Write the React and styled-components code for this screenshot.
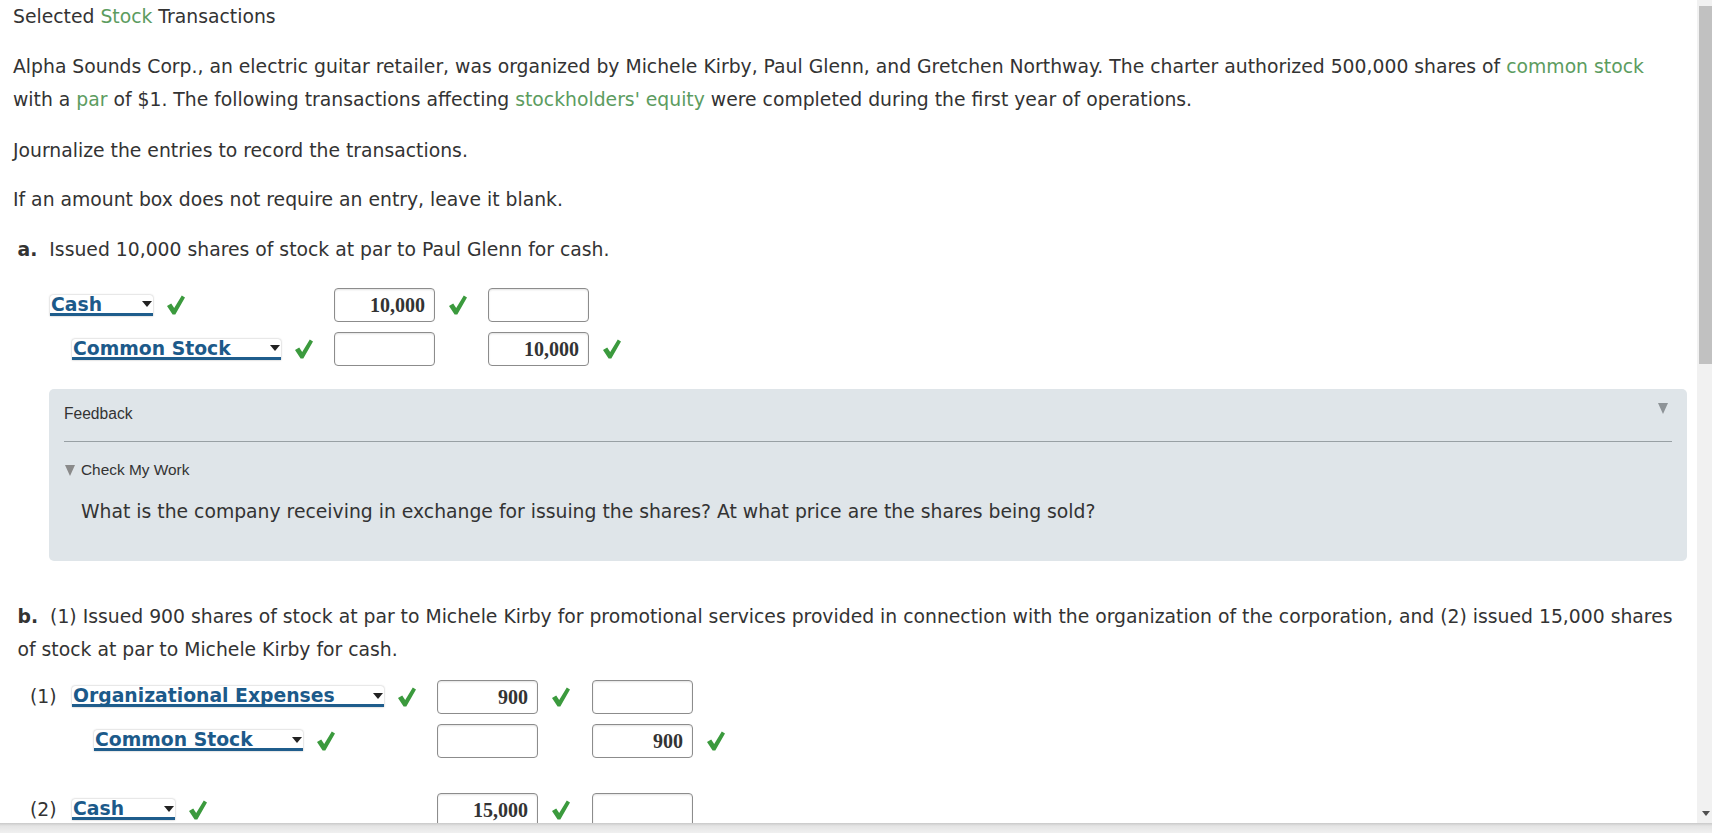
import React from "react";
import styled, { createGlobalStyle } from "styled-components";

const Global = createGlobalStyle`
  html, body { margin: 0; padding: 0; height: 100%; overflow: hidden; background: #fff; }
`;

const Page = styled.div`
  padding: 1px 27px 0 13px;
  font-family: "DejaVu Sans", Verdana, sans-serif;
  font-size: 18.8px;
  line-height: 33px;
  color: #333;
`;

const Title = styled.div`
  line-height: 32px;
`;

const Para = styled.p`
  margin: ${(p) => p.$mt ?? 17}px 0 0;
`;

const Term = styled.span`
  color: #5c9c60;
`;

const Part = styled.div`
  padding-left: 4.5px;
  margin-top: ${(p) => p.$mt}px;
`;

const PartLabel = styled.b`
  margin-right: 12px;
`;

const Journal = styled.div`
  display: flex;
  flex-direction: column;
  gap: ${(p) => p.$gap}px;
  margin-top: ${(p) => p.$mt}px;
  margin-left: ${(p) => p.$ml}px;
`;

const Row = styled.div`
  display: grid;
  grid-template-columns: ${(p) => p.$cols};
  align-items: center;
  height: 34px;
  margin-top: ${(p) => p.$mt || 0}px;
`;

const RowLabel = styled.span`
  white-space: nowrap;
`;

const Cell = styled.div`
  display: flex;
  align-items: center;
  gap: 14px;
  padding-left: ${(p) => p.$indent || 0}px;
`;

const Select = styled.div`
  display: flex;
  justify-content: space-between;
  box-sizing: border-box;
  width: ${(p) => p.$w}px;
  height: 21px;
  background: #fff;
  border-bottom: 3px solid #1f5d8c;
  border-radius: 3px 3px 0 0;
  box-shadow: 0 0 2px rgba(0, 0, 0, 0.35);
  color: #1c5a8a;
  font-weight: bold;
  padding: 0 1px 0 1px;
`;

const SelectText = styled.span`
  display: block;
  height: 18px;
  line-height: 20px;
  white-space: nowrap;
`;

const Arrow = styled.span`
  align-self: center;
  margin-top: 1px;
  width: 0;
  height: 0;
  border-left: 5px solid transparent;
  border-right: 5px solid transparent;
  border-top: 6px solid #222;
`;

const Amount = styled.div`
  box-sizing: border-box;
  width: 101px;
  height: 34px;
  border: 1px solid #8c8c8c;
  border-radius: 4px;
  box-shadow: inset 0 1px 2px rgba(0, 0, 0, 0.12);
  background: #fff;
  font-family: "Liberation Serif", "Times New Roman", serif;
  font-weight: bold;
  font-size: 20px;
  line-height: 32px;
  text-align: right;
  padding-right: 9px;
  color: #333;
`;

const CheckSvg = styled.svg`
  width: 18px;
  height: 20px;
  flex: none;
  visibility: ${(p) => (p.$hidden ? "hidden" : "visible")};
`;

const Check = ({ hidden }) => (
  <CheckSvg viewBox="0 0 18 20" $hidden={hidden}>
    <path
      d="M0 10.9 L4.2 8.4 L7.2 13 L14.8 0.4 L18 2.4 L8.3 19.6 L5.6 19.6 Z"
      fill="#3b9a3d"
    />
  </CheckSvg>
);

const FeedbackBox = styled.div`
  margin: 23px -2px 0 31.5px;
  background: #dfe5e9;
  border-radius: 5px;
  padding: 15px 15px 33px 15px;
`;

const FeedbackHead = styled.div`
  display: flex;
  justify-content: space-between;
  font-family: "Liberation Sans", Arial, sans-serif;
  font-size: 15.6px;
  line-height: 20px;
  color: #333;
`;

const DownTri = styled.span`
  width: 0;
  height: 0;
  margin: ${(p) => p.$m};
  border-left: 5px solid transparent;
  border-right: 5px solid transparent;
  border-top: 11px solid ${(p) => p.$c};
`;

const Rule = styled.div`
  height: 1px;
  background: #98a0a4;
  margin-top: 17px;
`;

const Toggle = styled.div`
  display: flex;
  align-items: center;
  gap: 6px;
  margin-top: 18px;
  font-family: "Liberation Sans", Arial, sans-serif;
  font-size: 15.4px;
  line-height: 20px;
  color: #333;
`;

const Question = styled.div`
  margin-top: 15px;
  padding-left: 17px;
`;

const ScrollTrack = styled.div`
  position: fixed;
  top: 0;
  right: 0;
  bottom: 0;
  width: 15px;
  background: #f1f1f1;
`;

const ScrollThumb = styled.div`
  position: absolute;
  top: 6px;
  left: 2px;
  right: 0;
  height: 358px;
  background: #c1c1c1;
`;

const ScrollDown = styled.span`
  position: absolute;
  bottom: 17px;
  left: 5px;
  width: 0;
  height: 0;
  border-left: 4px solid transparent;
  border-right: 4px solid transparent;
  border-top: 5px solid #505050;
`;

const BottomBar = styled.div`
  position: fixed;
  left: 0;
  right: 0;
  bottom: 0;
  height: 10px;
  background: linear-gradient(to bottom, #c9c9c9 0, #e4e4e4 3px, #f0f0f0 100%);
`;

const Entry = ({ cols, label, acct, w, indent, debit, credit, mt }) => (
  <Row $cols={cols} $mt={mt}>
    <RowLabel>{label}</RowLabel>
    <Cell $indent={indent}>
      <Select $w={w}>
        <SelectText>{acct}</SelectText>
        <Arrow />
      </Select>
      <Check />
    </Cell>
    <Cell>
      <Amount>{debit}</Amount>
      <Check hidden={!debit} />
    </Cell>
    <Cell>
      <Amount>{credit}</Amount>
      <Check hidden={!credit} />
    </Cell>
  </Row>
);

export default function App() {
  const colsA = "0px 284px 154px auto";
  const colsB = "42px 365px 155px auto";
  return (
    <>
      <Global />
      <Page>
        <Title>
          Selected <Term>Stock</Term> Transactions
        </Title>
        <Para $mt={16.5}>
          Alpha Sounds Corp., an electric guitar retailer, was organized by Michele Kirby, Paul
          Glenn, and Gretchen Northway. The charter authorized 500,000 shares of{" "}
          <Term>common stock</Term> with a <Term>par</Term> of $1. The following transactions
          affecting <Term>stockholders' equity</Term> were completed during the first year of
          operations.
        </Para>
        <Para $mt={18}>Journalize the entries to record the transactions.</Para>
        <Para $mt={16.5}>If an amount box does not require an entry, leave it blank.</Para>

        <Part $mt={17}>
          <div>
            <PartLabel>a.</PartLabel>Issued 10,000 shares of stock at par to Paul Glenn for cash.
          </div>
          <Journal $mt={22} $ml={32.5} $gap={10}>
            <Entry cols={colsA} acct="Cash" w={103} debit="10,000" />
            <Entry cols={colsA} acct="Common Stock" w={209} indent={22} credit="10,000" />
          </Journal>
          <FeedbackBox>
            <FeedbackHead>
              <span>Feedback</span>
              <DownTri $c="#8d9397" $m="-1px 4px 0 0" />
            </FeedbackHead>
            <Rule />
            <Toggle>
              <DownTri $c="#8a8a8a" $m="0 0 0 1px" />
              <span>Check My Work</span>
            </Toggle>
            <Question>
              What is the company receiving in exchange for issuing the shares? At what price are
              the shares being sold?
            </Question>
          </FeedbackBox>
        </Part>

        <Part $mt={39}>
          <div>
            <PartLabel>b.</PartLabel>(1) Issued 900 shares of stock at par to Michele Kirby for
            promotional services provided in connection with the organization of the corporation,
            and (2) issued 15,000 shares of stock at par to Michele Kirby for cash.
          </div>
          <Journal $mt={13.5} $ml={12.5} $gap={10}>
            <Entry cols={colsB} label="(1)" acct="Organizational Expenses" w={312} debit="900" />
            <Entry cols={colsB} acct="Common Stock" w={209} indent={22} credit="900" />
            <Entry cols={colsB} label="(2)" acct="Cash" w={103} debit="15,000" mt={25} />
          </Journal>
        </Part>
      </Page>
      <ScrollTrack>
        <ScrollThumb />
        <ScrollDown />
      </ScrollTrack>
      <BottomBar />
    </>
  );
}
